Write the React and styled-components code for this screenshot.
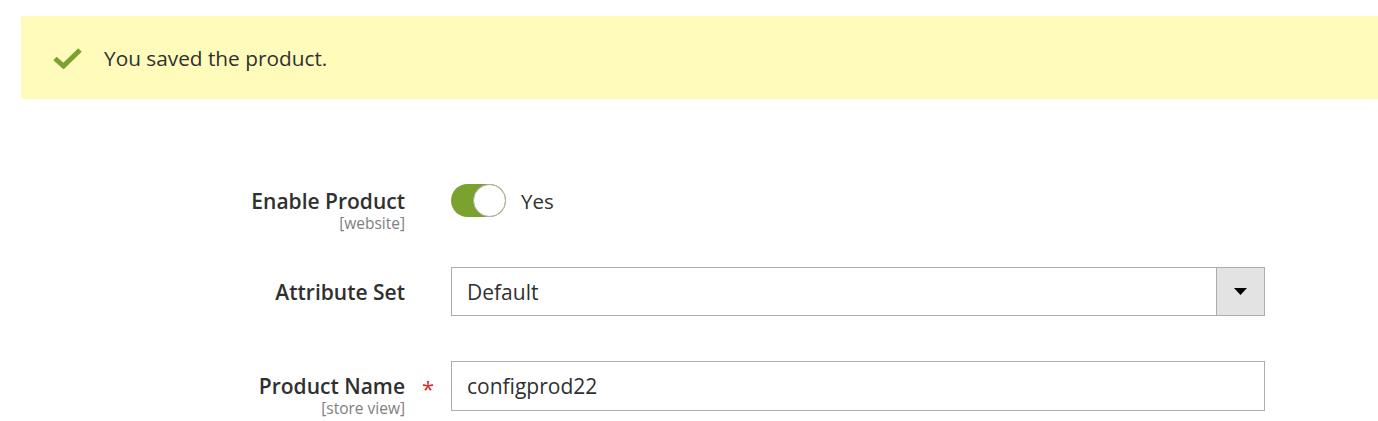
import React from 'react';
import styled, { createGlobalStyle } from 'styled-components';

const GlobalStyle = createGlobalStyle`
  body {
    margin: 0;
    background: #fff;
    font-family: "Open Sans", "Liberation Sans", sans-serif;
    color: #303030;
  }
`;

const Page = styled.div`
  padding-top: 16px;
`;

const Message = styled.div`
  margin-left: 21px;
  height: 83px;
  background: #fffbbb;
  display: flex;
  align-items: center;
  gap: 22px;
  padding-left: 32px;
  font-size: 20.8px;
  color: #303030;
`;

const Form = styled.div`
  margin-top: 85px;
  display: flex;
  flex-direction: column;
`;

const Field = styled.div`
  display: grid;
  grid-template-columns: 405px 46px 814px;
  align-items: start;
  height: ${p => p.$pitch}px;
`;

const LabelBlock = styled.div`
  text-align: right;
  padding-top: ${p => (p.$height - 24) / 2}px;
`;

const LabelText = styled.div`
  font-size: 21px;
  font-weight: 600;
  line-height: 24px;
  color: #303030;
`;

const Scope = styled.div`
  font-size: 15.5px;
  line-height: 20px;
  color: #808080;
`;

const Required = styled.div`
  color: #e22626;
  font-size: 22px;
  text-align: center;
  line-height: 48px;
  padding-top: 3px;
`;

const SwitchRow = styled.div`
  display: flex;
  align-items: center;
  gap: 15px;
  height: 33px;
  font-size: 20.5px;
`;

const Switch = styled.div`
  width: 55px;
  height: 33px;
  border-radius: 17px;
  background: #79a22e;
  display: flex;
  justify-content: flex-end;
  box-sizing: border-box;
`;

const Knob = styled.div`
  width: 33px;
  height: 33px;
  border-radius: 50%;
  background: #fff;
  border: 1px solid #adadad;
  box-sizing: border-box;
`;

const Select = styled.div`
  display: flex;
  height: 49px;
  border: 1px solid #adadad;
  box-sizing: border-box;
`;

const SelectValue = styled.div`
  flex: 1;
  display: flex;
  align-items: center;
  padding-left: 15px;
  font-size: 21px;
`;

const SelectButton = styled.div`
  width: 47px;
  background: #e3e3e3;
  border-left: 1px solid #adadad;
  display: flex;
  align-items: center;
  justify-content: center;
`;

const Input = styled.div`
  height: 50px;
  border: 1px solid #adadad;
  box-sizing: border-box;
  display: flex;
  align-items: center;
  padding-left: 15px;
  font-size: 21px;
`;

const Check = () => (
  <svg width="29" height="22" viewBox="0 0 29 22">
    <path d="M2 11.5 L10.5 19 L27 3" fill="none" stroke="#79a22e" strokeWidth="5" />
  </svg>
);

const Arrow = () => (
  <svg width="13" height="7" viewBox="0 0 13 7">
    <path d="M0 0 H13 L6.5 7 Z" fill="#000" />
  </svg>
);

export default function App() {
  return (
    <Page>
      <GlobalStyle />
      <Message>
        <Check />
        <span>You saved the product.</span>
      </Message>
      <Form>
        <Field $pitch={83}>
          <LabelBlock $height={33}>
            <LabelText>Enable Product</LabelText>
            <Scope>[website]</Scope>
          </LabelBlock>
          <div />
          <SwitchRow>
            <Switch><Knob /></Switch>
            <span>Yes</span>
          </SwitchRow>
        </Field>
        <Field $pitch={94}>
          <LabelBlock $height={49}>
            <LabelText>Attribute Set</LabelText>
          </LabelBlock>
          <div />
          <Select>
            <SelectValue>Default</SelectValue>
            <SelectButton><Arrow /></SelectButton>
          </Select>
        </Field>
        <Field $pitch={60}>
          <LabelBlock $height={50}>
            <LabelText>Product Name</LabelText>
            <Scope>[store view]</Scope>
          </LabelBlock>
          <Required>*</Required>
          <Input>configprod22</Input>
        </Field>
      </Form>
    </Page>
  );
}
